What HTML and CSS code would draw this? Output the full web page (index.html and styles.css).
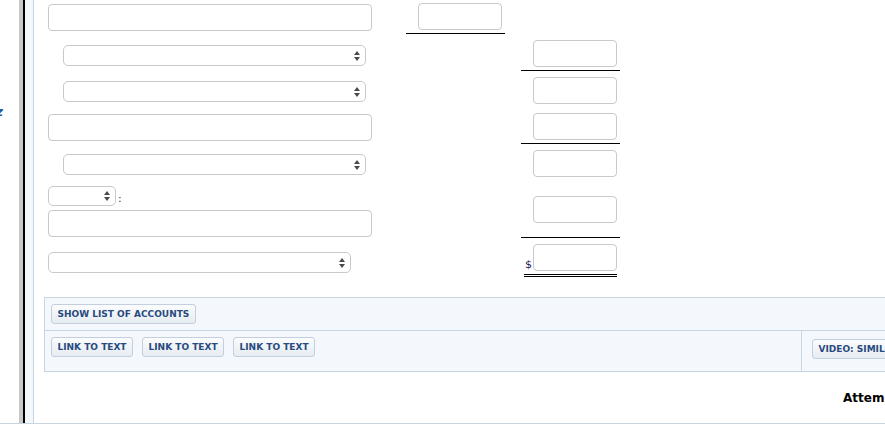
FILE: index.html
```html
<!DOCTYPE html>
<html lang="en">
<head>
<meta charset="utf-8">
<title>Journal entry</title>
<link rel="stylesheet" href="styles.css">
</head>
<body>
<div class="frame">
  <div class="gutter"><span class="mark">z</span></div>
  <div class="rail rail-gray"></div>
  <div class="rail rail-black"></div>
  <div class="rail rail-light"></div>
  <div class="content">
    <div class="ledger">
      <div class="row r1">
        <div class="c1"><input class="field wide" type="text"></div>
        <div class="c2 cell-rule"><input class="field amt" type="text"></div>
      </div>
      <div class="row r2">
        <div class="c1 indent"><div class="select sel-wide"><svg class="arrows" viewBox="0 0 6 10" width="6" height="10"><polygon points="0,4 3,0 6,4"/><polygon points="0,6 6,6 3,10"/></svg></div></div>
        <div class="c3 cell-rule"><input class="field amt" type="text"></div>
      </div>
      <div class="row r3">
        <div class="c1 indent"><div class="select sel-wide"><svg class="arrows" viewBox="0 0 6 10" width="6" height="10"><polygon points="0,4 3,0 6,4"/><polygon points="0,6 6,6 3,10"/></svg></div></div>
        <div class="c3"><input class="field amt" type="text"></div>
      </div>
      <div class="row r4">
        <div class="c1"><input class="field wide" type="text"></div>
        <div class="c3 cell-rule"><input class="field amt" type="text"></div>
      </div>
      <div class="row r5">
        <div class="c1 indent"><div class="select sel-wide"><svg class="arrows" viewBox="0 0 6 10" width="6" height="10"><polygon points="0,4 3,0 6,4"/><polygon points="0,6 6,6 3,10"/></svg></div></div>
        <div class="c3"><input class="field amt" type="text"></div>
      </div>
      <div class="row r6">
        <div class="c1">
          <div class="label-line"><div class="select sel-small"><svg class="arrows" viewBox="0 0 6 10" width="6" height="10"><polygon points="0,4 3,0 6,4"/><polygon points="0,6 6,6 3,10"/></svg></div><span class="colon">:</span></div>
          <input class="field wide stacked" type="text">
        </div>
        <div class="c3 cell-rule"><input class="field amt" type="text"></div>
      </div>
      <div class="row r7">
        <div class="c1"><div class="select sel-wide"><svg class="arrows" viewBox="0 0 6 10" width="6" height="10"><polygon points="0,4 3,0 6,4"/><polygon points="0,6 6,6 3,10"/></svg></div></div>
        <div class="c3"><div class="total"><span class="dollar">$</span><input class="field amt" type="text"></div></div>
      </div>
    </div>

    <div class="panel">
      <div class="panel-top">
        <button class="btn" type="button">SHOW LIST OF ACCOUNTS</button>
      </div>
      <div class="panel-bottom">
        <div class="links">
          <button class="btn" type="button">LINK TO TEXT</button>
          <button class="btn" type="button">LINK TO TEXT</button>
          <button class="btn" type="button">LINK TO TEXT</button>
        </div>
        <div class="video">
          <button class="btn" type="button">VIDEO: SIMILAR PROBLEM</button>
        </div>
      </div>
    </div>

    <div class="attempts">Attempts: 1 of 3 used</div>
  </div>
</div>
</body>
</html>
```
FILE: styles.css
```css
html, body {
  margin: 0;
  padding: 0;
  background: #ffffff;
  overflow: hidden;
}

body {
  font-family: "DejaVu Sans", Verdana, sans-serif;
}

.frame {
  display: flex;
  height: 423px;
  border-bottom: 1px solid #c8d4e0;
  overflow: hidden;
}

.gutter {
  width: 19px;
  flex: 0 0 19px;
  padding-top: 101px;
  box-sizing: border-box;
  overflow: hidden;
}

.mark {
  display: inline-block;
  margin-left: -4px;
  font-size: 12px;
  font-weight: bold;
  font-style: italic;
  color: #1f5c99;
  line-height: 14px;
}

.rail { flex: 0 0 auto; }
.rail-gray { width: 4px; background: #c9c9c9; }
.rail-black { width: 2px; background: #000000; }
.rail-light { width: 8px; background: #f4f7fb; border-right: 1px solid #c8d4e0; }

.content {
  flex: 1 1 auto;
  min-width: 0;
}

/* ledger grid */
.ledger {
  padding-left: 14px;
}

.row {
  display: grid;
  grid-template-columns: 358px 115px 99px;
  align-items: start;
}

.c1 { grid-column: 1; }
.c2 { grid-column: 2; width: 99px; padding-left: 12px; box-sizing: border-box; }
.c3 { grid-column: 3; width: 99px; padding-left: 12px; box-sizing: border-box; }

.indent { padding-left: 15px; }

.cell-rule { border-bottom: 1px solid #000000; }

.field {
  display: block;
  box-sizing: border-box;
  height: 27px;
  margin: 0;
  padding: 0 4px;
  border: 1px solid #c9c9c9;
  border-radius: 4px;
  background: #ffffff;
  font: 12px "DejaVu Sans", sans-serif;
  outline: none;
}

.wide { width: 324px; }
.amt { width: 84px; }

.select {
  box-sizing: border-box;
  height: 21px;
  border: 1px solid #c9c9c9;
  border-radius: 5px;
  background: #ffffff;
  display: flex;
  align-items: center;
  justify-content: flex-end;
  padding-right: 5px;
}

.sel-wide { width: 303px; }
.sel-small { width: 68px; height: 20px; }

.arrows { fill: #4a4a4a; display: block; }

.label-line {
  display: flex;
  align-items: center;
}

.colon {
  font-size: 11px;
  line-height: 14px;
  color: #333333;
  margin-left: 2px;
  padding-top: 5px;
}

.stacked { margin-top: 4px; }

/* row heights and offsets */
.r1 { height: 36px; }
.r1 .c1 { padding-top: 4px; }
.r1 .c2 { padding-top: 3px; padding-bottom: 3px; }

.r2 { height: 37px; }
.r2 .c1 { padding-top: 9px; }
.r2 .c3 { padding-top: 4px; padding-bottom: 3px; }

.r3 { height: 36px; }
.r3 .c1 { padding-top: 8px; }
.r3 .c3 { padding-top: 4px; }

.r4 { height: 37px; }
.r4 .c1 { padding-top: 5px; }
.r4 .c3 { padding-top: 4px; padding-bottom: 3px; }

.r5 { height: 34px; }
.r5 .c1 { padding-top: 8px; }
.r5 .c3 { padding-top: 4px; }

.r6 { height: 60px; }
.r6 .c1 { padding-top: 6px; }
.r6 .c3 { padding-top: 16px; padding-bottom: 14px; }

.r7 { height: 40px; }
.r7 .c1 { padding-top: 12px; }
.r7 .c3 { padding-top: 4px; padding-left: 3px; }

.total {
  display: flex;
  align-items: flex-end;
  width: 93px;
  padding-bottom: 3px;
  border-bottom: 3px double #000000;
}

.dollar {
  width: 9px;
  font-size: 11px;
  line-height: 13px;
  color: #1d1d55;
  padding-left: 1px;
  box-sizing: border-box;
}

/* panel */
.panel {
  margin-top: 17px;
  margin-left: 10px;
  width: 1100px;
  border: 1px solid #c8d5e2;
  background: #f4f7fb;
}

.panel-top {
  display: flex;
  padding: 6px 6px;
  border-bottom: 1px solid #c8d5e2;
}

.panel-bottom {
  display: grid;
  grid-template-columns: 756px 1fr;
}

.links {
  display: flex;
  align-items: flex-start;
  gap: 9px;
  padding: 6px 6px 14px;
}

.video {
  display: flex;
  align-items: flex-start;
  border-left: 1px solid #c8d5e2;
  padding: 8px 10px 0;
}

.btn {
  display: block;
  box-sizing: border-box;
  height: 20px;
  margin: 0;
  padding: 0 5.5px;
  border: 1px solid #c3cfdc;
  border-radius: 3px;
  background: linear-gradient(#fbfcfd, #e6ecf2);
  color: #284a7e;
  font: bold 9px "DejaVu Sans", Verdana, sans-serif;
  line-height: 18px;
  white-space: nowrap;
  cursor: pointer;
}

.attempts {
  margin-top: 19px;
  padding-left: 809px;
  font-size: 12px;
  font-weight: bold;
  line-height: 14px;
  color: #000000;
  white-space: nowrap;
}
```
